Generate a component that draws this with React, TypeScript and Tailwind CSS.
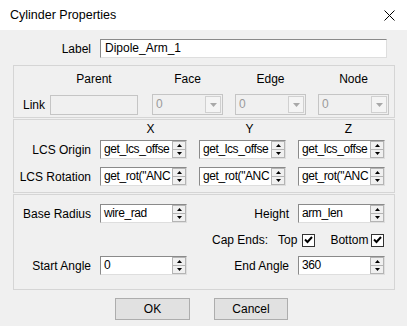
import React from 'react';

const font = { fontFamily: '"Liberation Sans", Arial, sans-serif' };

function Arrow({ up, color = '#000' }: { up?: boolean; color?: string }) {
  return (
    <svg width="5" height="3" viewBox="0 0 5 3">
      {up ? <path d="M2.5 0 L5 3 L0 3 Z" fill={color} /> : <path d="M0 0 L5 0 L2.5 3 Z" fill={color} />}
    </svg>
  );
}

function Spin({ value }: { value: string }) {
  return (
    <div className="flex h-[19px] w-[87px] bg-white border border-t-[#8a8a8a] border-l-[#8a8a8a] border-r-[#dedede] border-b-[#dedede]">
      <div className="flex-1 whitespace-nowrap pl-[3px] leading-[17px] tracking-[-0.4px]">{value}</div>
      <div className="flex w-[14px] flex-col">
        <div className="flex flex-1 items-center justify-center border border-[#b4b4b4] bg-[#f0f0f0]">
          <Arrow up />
        </div>
        <div className="flex flex-1 items-center justify-center border border-t-0 border-[#b4b4b4] bg-[#f0f0f0]">
          <Arrow />
        </div>
      </div>
    </div>
  );
}

function Combo() {
  return (
    <div className="flex h-[21px] w-[71px] border border-[#c5c5c5] bg-[#f0f0f0] text-[#9a9a9a]">
      <div className="flex-1 pl-[3px] leading-[19px]">0</div>
      <div className="m-[1px] flex w-[16px] items-center justify-center border border-[#d0d0d0] bg-[#f4f4f4]">
        <svg width="7" height="4" viewBox="0 0 7 4">
          <path d="M0 0 L7 0 L3.5 4 Z" fill="#a8a8a8" />
        </svg>
      </div>
    </div>
  );
}

function Check() {
  return (
    <div className="flex h-[13px] w-[13px] items-center justify-center border border-[#333] bg-white">
      <svg width="9" height="8" viewBox="0 0 9 8">
        <path d="M1 3.5 L3.5 6 L8 1" fill="none" stroke="#000" strokeWidth="2" />
      </svg>
    </div>
  );
}

function Group({ className, children }: { className: string; children: React.ReactNode }) {
  return <div className={`w-[382px] border border-[#d5d5d5] ${className}`}>{children}</div>;
}

export default function App() {
  return (
    <div className="flex h-[326px] w-[407px] flex-col bg-[#f0f0f0] text-[12px] text-black" style={font}>
      {/* title bar */}
      <div className="flex h-[30px] items-center justify-between bg-white pl-[10px] pr-[12px] text-[12.5px]">
        <span>Cylinder Properties</span>
        <svg width="11" height="11" viewBox="0 0 11 11">
          <path d="M0.5 0.5 L10.5 10.5 M10.5 0.5 L0.5 10.5" stroke="#000" strokeWidth="1" />
        </svg>
      </div>

      <div className="flex flex-col pl-[13px]">
        <div className="mt-[9px] flex items-center">
          <span className="w-[87px] pr-[9px] text-right">Label</span>
          <div className="h-[19px] w-[287px] border border-t-[#8a8a8a] border-l-[#8a8a8a] border-r-[#dedede] border-b-[#dedede] bg-white pl-[4px] leading-[17px]">
            Dipole_Arm_1
          </div>
        </div>

        {/* link group */}
        <Group className="mt-[7px] h-[53px]">
          <div className="mt-[6px] flex h-[14px] leading-[14px]">
            <span className="ml-[36px] w-[88px] text-center">Parent</span>
            <span className="ml-[14px] w-[71px] text-center">Face</span>
            <span className="ml-[12px] w-[71px] text-center">Edge</span>
            <span className="ml-[12px] w-[71px] text-center">Node</span>
          </div>
          <div className="mt-[8px] flex items-center">
            <span className="ml-[9px] w-[27px]">Link</span>
            <div className="h-[20px] w-[88px] border border-[#c5c5c5] bg-[#f0f0f0]" />
            <div className="ml-[14px]"><Combo /></div>
            <div className="ml-[12px]"><Combo /></div>
            <div className="ml-[12px]"><Combo /></div>
          </div>
        </Group>

        {/* LCS group */}
        <Group className="mt-[1px] h-[74px]">
          <div className="mt-[2px] flex h-[14px] pl-[90px] leading-[14px]">
            <span className="w-[87px] text-center pl-[6px]">X</span>
            <span className="ml-[12px] w-[87px] text-center pl-[6px]">Y</span>
            <span className="ml-[12px] w-[87px] text-center pl-[6px]">Z</span>
          </div>
          <div className="mt-[4px] flex items-center">
            <span className="w-[86px] pr-[9px] text-right">LCS Origin</span>
            <div className="flex gap-[12px]">
              <Spin value="get_lcs_offse" />
              <Spin value="get_lcs_offse" />
              <Spin value="get_lcs_offse" />
            </div>
          </div>
          <div className="mt-[8px] flex items-center">
            <span className="w-[86px] pr-[9px] text-right">LCS Rotation</span>
            <div className="flex gap-[12px]">
              <Spin value='get_rot("ANC' />
              <Spin value='get_rot("ANC' />
              <Spin value='get_rot("ANC' />
            </div>
          </div>
        </Group>

        {/* dimensions group */}
        <Group className="mt-[1px] h-[96px]">
          <div className="mt-[9px] flex items-center">
            <span className="w-[86px] pr-[9px] text-right">Base Radius</span>
            <Spin value="wire_rad" />
            <span className="w-[111px] pr-[9px] text-right">Height</span>
            <Spin value="arm_len" />
          </div>
          <div className="mt-[10px] flex h-[14px] items-center whitespace-nowrap">
            <span className="ml-[198px]">Cap Ends:</span>
            <span className="ml-[10px]">Top</span>
            <div className="ml-[5px]"><Check /></div>
            <span className="ml-[15px]">Bottom</span>
            <div className="ml-[3px]"><Check /></div>
          </div>
          <div className="mt-[9px] flex items-center">
            <span className="w-[86px] pr-[9px] text-right">Start Angle</span>
            <Spin value="0" />
            <span className="w-[111px] pr-[9px] text-right">End Angle</span>
            <Spin value="360" />
          </div>
        </Group>
      </div>

      <div className="mt-[8px] flex pl-[115px] gap-[24px]">
        <button className="h-[22px] w-[75px] border border-[#adadad] bg-[#e1e1e1]">OK</button>
        <button className="h-[22px] w-[74px] border border-[#adadad] bg-[#e1e1e1]">Cancel</button>
      </div>
    </div>
  );
}
